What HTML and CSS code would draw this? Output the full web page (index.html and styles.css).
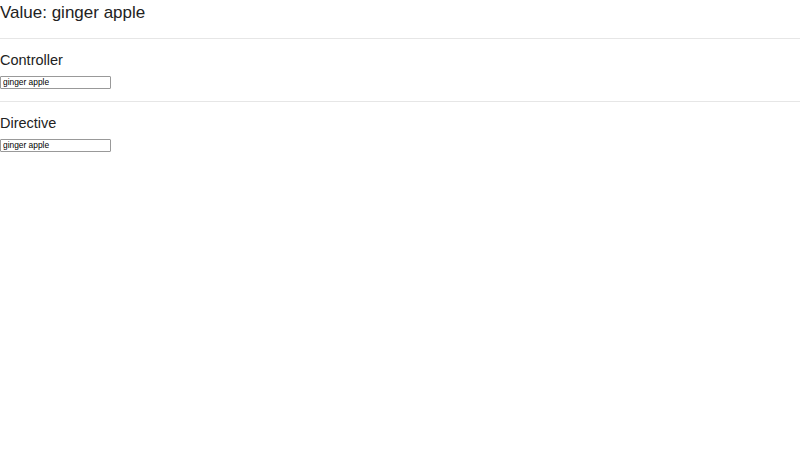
FILE: index.html
```html
<!DOCTYPE html>
<html lang="en">
<head>
    <meta charset="UTF-8">
    <meta name="viewport" content="width=device-width, initial-scale=1.0">
    <title>Value binding</title>
    <link rel="stylesheet" href="styles.css">
</head>
<body>
    <h3 class="value-title">Value: ginger apple</h3>
    <hr class="divider">
    <div class="section">
        <h4 class="section-title">Controller</h4>
        <input class="value-input" type="text" value="ginger apple">
    </div>
    <hr class="divider">
    <div class="section">
        <h4 class="section-title">Directive</h4>
        <input class="value-input" type="text" value="ginger apple">
    </div>
</body>
</html>
```

FILE: styles.css
```css
body {
    font-family: "Liberation Sans", Arial, sans-serif;
    margin: 0;
    padding: 0;
    color: #222;
    background: #fff;
}

.value-title {
    font-size: 17px;
    font-weight: normal;
    line-height: 1.1;
    margin: 4px 0 0 0;
}

.divider {
    border: none;
    border-top: 1px solid #e6e6e6;
    margin: 15px 0 0 0;
    height: 0;
}

.section {
    padding-top: 14px;
}

.section-title {
    font-size: 14.5px;
    font-weight: normal;
    line-height: 1.1;
    margin: 0 0 7px 0;
}

.value-input {
    display: block;
    box-sizing: border-box;
    width: 111px;
    height: 13px;
    margin: 0 0 12px 0;
    padding: 0 1px 0 2px;
    border: 1px solid #999;
    border-radius: 1px;
    font-family: "Liberation Sans", Arial, sans-serif;
    font-size: 8.4px;
    color: #000;
    background: #fff;
}

.section + .divider {
    margin-top: 0;
}
```
